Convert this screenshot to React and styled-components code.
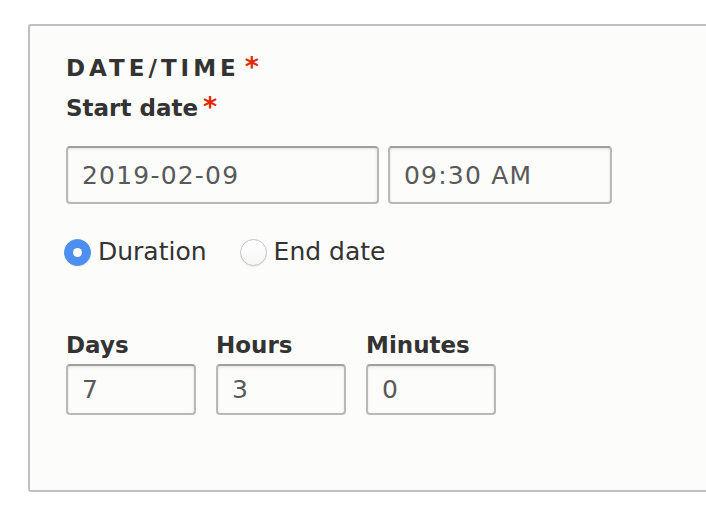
import React from 'react';
import styled, { createGlobalStyle } from 'styled-components';

const GlobalStyle = createGlobalStyle`
    html, body {
        margin: 0;
        padding: 0;
        background: #ffffff;
        overflow: hidden;
    }
    body {
        font-family: "DejaVu Sans", "Noto Sans", sans-serif;
        color: #333333;
    }
`;

export default function App() {
    return (
        <>
            <GlobalStyle />
            <Fieldset>
                <Legend>
                    Date/Time<Required>*</Required>
                </Legend>
                <FieldLabel>
                    Start date<Required>*</Required>
                </FieldLabel>
                <DateRow>
                    <TextInput type='text' defaultValue='2019-02-09' width={313} height={58} />
                    <TextInput type='text' defaultValue='09:30 AM' width={224} height={58} />
                </DateRow>
                <RadioRow>
                    <RadioOption>
                        <Radio type='radio' name='mode' defaultChecked />
                        <RadioText>Duration</RadioText>
                    </RadioOption>
                    <RadioOption>
                        <Radio type='radio' name='mode' />
                        <RadioText>End date</RadioText>
                    </RadioOption>
                </RadioRow>
                <DurationRow>
                    {
                        [['Days', '7'], ['Hours', '3'], ['Minutes', '0']].map(([label, value]) => {
                            return <DurationField key={label}>
                                <SmallLabel>{label}</SmallLabel>
                                <TextInput type='text' defaultValue={value} width={130} height={51} />
                            </DurationField>
                        })
                    }
                </DurationRow>
            </Fieldset>
        </>
    );
}

// the fieldset runs on past the right edge of the frame, so no right border
const Fieldset = styled.div`
    box-sizing: border-box;
    width: calc(100% - 28px);
    margin: 24px 0 0 28px;
    padding: 27px 0 75px 36px;
    background: #fcfcfa;
    border: 2px solid #bfbfbf;
    border-right: none;
    border-radius: 3px 0 0 3px;
`;

const Legend = styled.div`
    font-size: 23px;
    line-height: 30px;
    font-weight: 700;
    text-transform: uppercase;
    letter-spacing: 4px;
    color: #333333;
`;

const Required = styled.span`
    color: #e32700;
    margin-left: 5px;
    letter-spacing: 0;
    font-size: 27px;
    line-height: 0;
    font-weight: 700;
`;

const FieldLabel = styled.div`
    margin-top: 10px;
    font-size: 23px;
    line-height: 30px;
    font-weight: 700;
    color: #333333;
`;

const DateRow = styled.div`
    display: flex;
    gap: 9px;
    margin-top: 23px;
`;

const TextInput = styled.input`
    box-sizing: border-box;
    width: ${p => p.width}px;
    height: ${p => p.height}px;
    padding: 0 14px;
    font-family: "DejaVu Sans", "Noto Sans", sans-serif;
    font-size: 25px;
    letter-spacing: 1.2px;
    color: #595959;
    background: #fcfcfa;
    border: 2px solid #b8b8b8;
    border-top-color: #9f9f9f;
    border-radius: 4px;
    box-shadow: inset 0 1px 3px rgba(0, 0, 0, 0.1);
    outline: none;
`;

const RadioRow = styled.div`
    display: flex;
    align-items: center;
    gap: 33px;
    margin-top: 33px;
    margin-left: -2px;
`;

const RadioOption = styled.label`
    display: flex;
    align-items: center;
    gap: 7px;
`;

const Radio = styled.input`
    appearance: none;
    margin: 0;
    width: 27px;
    height: 27px;
    border-radius: 50%;
    border: 1px solid #c4c4c4;
    background: linear-gradient(#ffffff, #f6f6f6);
    box-shadow: 0 1px 1px rgba(0, 0, 0, 0.08);
    position: relative;

    &:checked {
        border-color: #4d8ff0;
        background: #4d8ff0;
    }

    &:checked::after {
        content: '';
        position: absolute;
        left: 50%;
        top: 50%;
        width: 9px;
        height: 9px;
        margin: -4.5px 0 0 -4.5px;
        border-radius: 50%;
        background: #ffffff;
    }
`;

const RadioText = styled.span`
    font-size: 25px;
    line-height: 30px;
    color: #333333;
`;

const DurationRow = styled.div`
    display: flex;
    gap: 20px;
    margin-top: 63px;
`;

const DurationField = styled.div`
    display: flex;
    flex-direction: column;
    gap: 4px;
`;

const SmallLabel = styled.div`
    font-size: 23px;
    line-height: 30px;
    font-weight: 700;
    color: #333333;
`;
